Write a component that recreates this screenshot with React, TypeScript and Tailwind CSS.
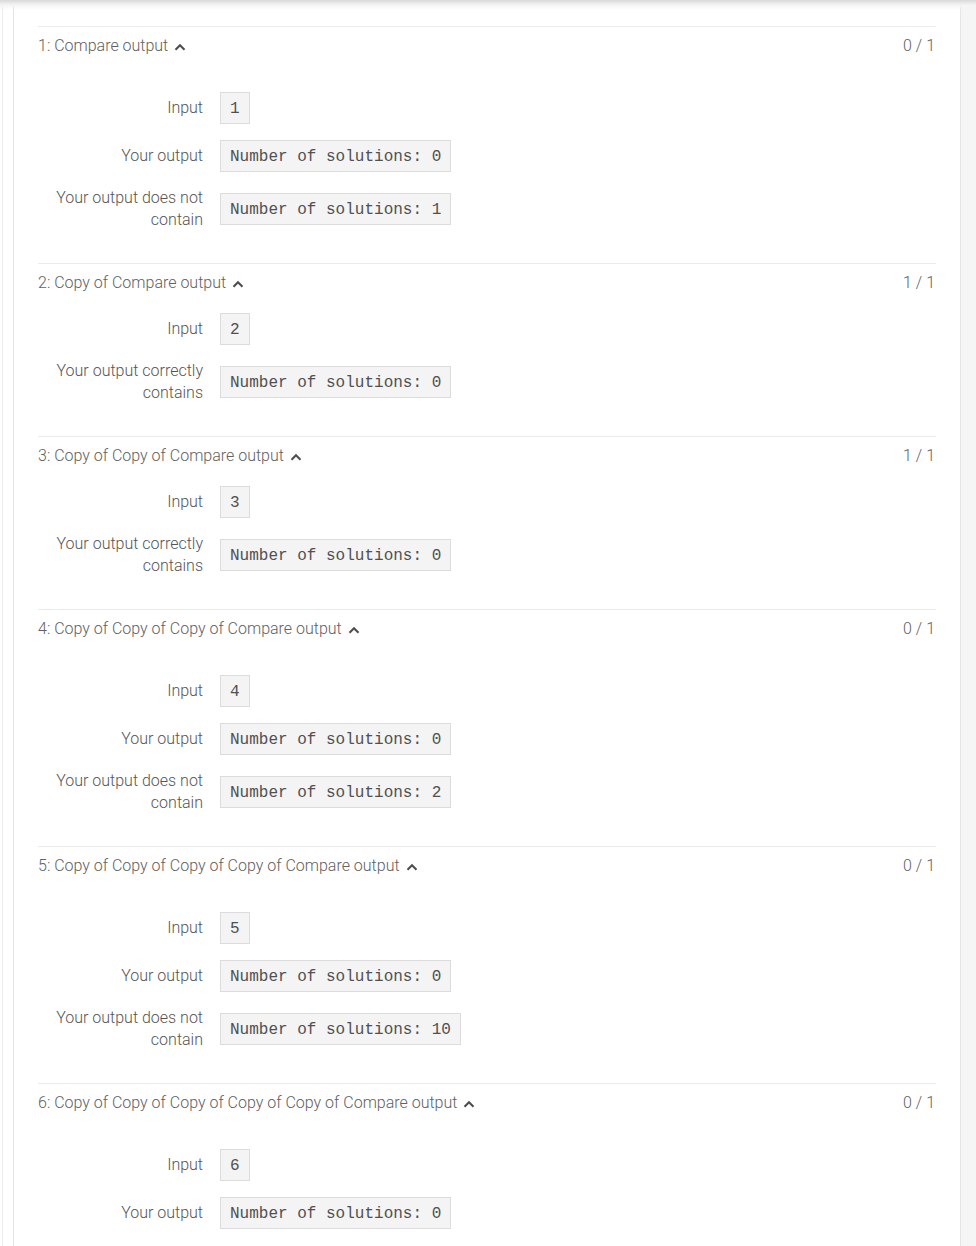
import { Fragment } from 'react'

type Row = { label: string; value: string }
type Test = { title: string; score: string; passed: boolean; rows: Row[] }

const tests: Test[] = [
  {
    title: '1: Compare output',
    score: '0 / 1',
    passed: false,
    rows: [
      { label: 'Input', value: '1' },
      { label: 'Your output', value: 'Number of solutions: 0' },
      { label: 'Your output does not contain', value: 'Number of solutions: 1' },
    ],
  },
  {
    title: '2: Copy of Compare output',
    score: '1 / 1',
    passed: true,
    rows: [
      { label: 'Input', value: '2' },
      { label: 'Your output correctly contains', value: 'Number of solutions: 0' },
    ],
  },
  {
    title: '3: Copy of Copy of Compare output',
    score: '1 / 1',
    passed: true,
    rows: [
      { label: 'Input', value: '3' },
      { label: 'Your output correctly contains', value: 'Number of solutions: 0' },
    ],
  },
  {
    title: '4: Copy of Copy of Copy of Compare output',
    score: '0 / 1',
    passed: false,
    rows: [
      { label: 'Input', value: '4' },
      { label: 'Your output', value: 'Number of solutions: 0' },
      { label: 'Your output does not contain', value: 'Number of solutions: 2' },
    ],
  },
  {
    title: '5: Copy of Copy of Copy of Copy of Compare output',
    score: '0 / 1',
    passed: false,
    rows: [
      { label: 'Input', value: '5' },
      { label: 'Your output', value: 'Number of solutions: 0' },
      { label: 'Your output does not contain', value: 'Number of solutions: 10' },
    ],
  },
  {
    title: '6: Copy of Copy of Copy of Copy of Copy of Compare output',
    score: '0 / 1',
    passed: false,
    rows: [
      { label: 'Input', value: '6' },
      { label: 'Your output', value: 'Number of solutions: 0' },
    ],
  },
]

const ChevronUp = () => (
  <svg width="12" height="8" viewBox="0 0 12 8" className="mt-[1px]">
    <polyline points="1.5,6.8 6,2.3 10.5,6.8" fill="none" stroke="#4d4d4d" strokeWidth="2.1" />
  </svg>
)

const TestCase = ({ test }: { test: Test }) => (
  <section className="border-t border-[#ebebeb]">
    <div className="flex justify-between pt-2 text-[16px] leading-[22px] text-[#616161]">
      <div className="flex items-center gap-[6px]">
        <span>{test.title}</span>
        <ChevronUp />
      </div>
      <span className="pr-[1px]">{test.score}</span>
    </div>
    <div className={`flex flex-col gap-[15px] pb-8 ${test.passed ? 'pt-[19px]' : 'pt-[35px]'}`}>
      {test.rows.map((row, i) => (
        <div key={row.label} className={`flex items-center ${i === 1 && !test.passed ? 'mt-[1px]' : ''}`}>
          <div className="w-[165px] text-right text-[16px] leading-[22px] text-[#555]">{row.label}</div>
          <div className="ml-[17px] border border-[#dcdcdc] bg-[#f4f4f4] px-[9px] pt-[6px] pb-[4px] font-['Liberation_Mono',monospace] text-[16px] leading-[20px] whitespace-pre text-[#505050]">
            {row.value}
          </div>
        </div>
      ))}
    </div>
  </section>
)

export default function App() {
  return (
    <div className="relative flex h-[1246px] overflow-hidden bg-white font-['Roboto',sans-serif] font-light">
      <div className="pointer-events-none absolute inset-x-0 top-0 h-[10px] bg-gradient-to-b from-[#d9d9d9] via-[#f4f4f4] to-transparent" />
      <div className="ml-[2px] w-[11px] border-l border-[#ececec]" />
      <main className="flex-1 border-l border-[#e4e4e4] px-6 pt-[26px]">
        {tests.map((t) => (
          <Fragment key={t.title}>
            <TestCase test={t} />
          </Fragment>
        ))}
      </main>
      <div className="w-[16px] border-l border-[#e6e6e6] bg-[#f5f5f5]" />
    </div>
  )
}
